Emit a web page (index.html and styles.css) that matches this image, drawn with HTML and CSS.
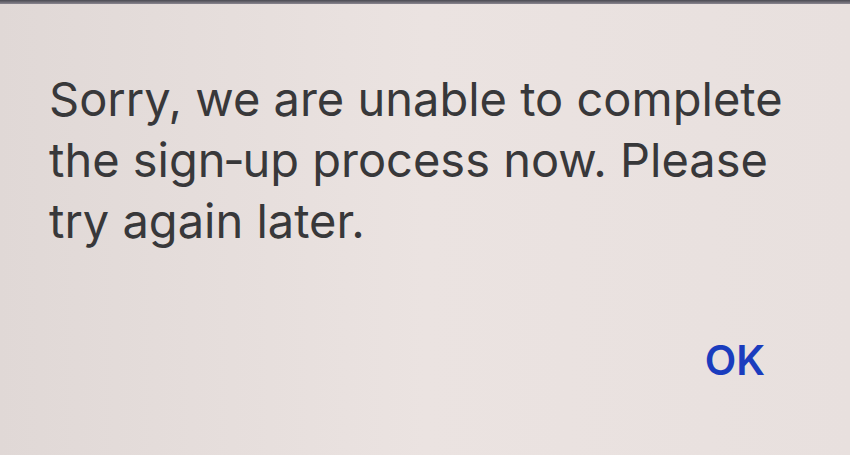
FILE: index.html
```html
<!DOCTYPE html>
<html>
<head>
<meta charset="utf-8">
<link rel="stylesheet" href="styles.css">
</head>
<body>
<div class="topbar"></div>
<div class="dialog">
  <p class="message">Sorry, we are unable to complete the sign&#8209;up process now. Please try again later.</p>
  <div class="actions"><span class="ok">OK</span></div>
</div>
</body>
</html>
```
FILE: styles.css
```css
html, body {
  margin: 0;
  padding: 0;
  width: 850px;
  height: 455px;
  overflow: hidden;
  background: #e6dedc;
}
.topbar {
  height: 4px;
  background: linear-gradient(#4a4a52, #8a8690);
}
.dialog {
  display: flex;
  flex-direction: column;
  padding: 64px 40px 0 49px;
  background: linear-gradient(90deg, #e0d8d6 0%, #ebe3e1 50%, #e8e0de 100%);
  height: 451px;
  box-sizing: border-box;
}
.message {
  margin: 0;
  font-family: "Inter", sans-serif;
  font-size: 47px;
  line-height: 61px;
  color: #38383a;
  width: 760px;
}
.actions {
  display: flex;
  justify-content: flex-end;
  margin-top: 84px;
  padding-right: 45px;
}
.ok {
  font-family: "Inter", sans-serif;
  font-weight: 600;
  font-size: 41px;
  color: #1a3cbe;
}
```
